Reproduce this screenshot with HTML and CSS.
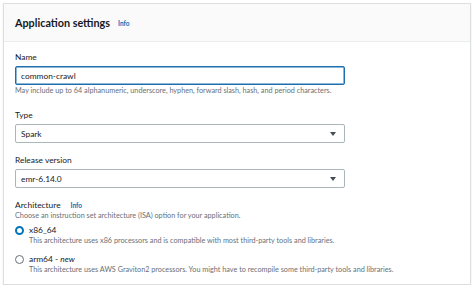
FILE: index.html
```html
<!DOCTYPE html>
<html>
<head>
<meta charset="utf-8">
<link rel="stylesheet" href="styles.css">
</head>
<body>
<div class="card">
  <div class="card-header">
    <h2 class="title">Application settings</h2>
    <span class="info">Info</span>
  </div>
  <div class="card-body">
    <div class="field">
      <div class="label">Name</div>
      <div class="input focused">common-crawl</div>
      <div class="hint">May include up to 64 alphanumeric, underscore, hyphen, forward slash, hash, and period characters.</div>
    </div>
    <div class="field">
      <div class="label">Type</div>
      <div class="input select"><span>Spark</span><span class="caret"></span></div>
    </div>
    <div class="field">
      <div class="label">Release version</div>
      <div class="input select"><span>emr-6.14.0</span><span class="caret"></span></div>
    </div>
    <div class="field">
      <div class="label-row"><span class="label">Architecture</span><span class="info">Info</span></div>
      <div class="hint tight">Choose an instruction set architecture (ISA) option for your application.</div>
      <div class="radio-item first">
        <span class="radio checked"></span>
        <div class="radio-text">
          <div class="radio-label">x86_64</div>
          <div class="hint">This architecture uses x86 processors and is compatible with most third-party tools and libraries.</div>
        </div>
      </div>
      <div class="radio-item">
        <span class="radio"></span>
        <div class="radio-text">
          <div class="radio-label">arm64 - <em>new</em></div>
          <div class="hint">This architecture uses AWS Graviton2 processors. You might have to recompile some third-party tools and libraries.</div>
        </div>
      </div>
    </div>
  </div>
</div>
</body>
</html>
```
FILE: styles.css
```css
html, body {
  margin: 0;
  padding: 0;
  background: #ffffff;
}
body {
  font-family: "Lato", "Open Sans", sans-serif;
  color: #16191f;
  padding: 3px 3px 0 3px;
}
.card {
  border: 1px solid #dcdfe0;
  box-shadow: 0 1px 1px rgba(0,22,40,0.15);
  background: #fff;
  height: 282px;
  box-sizing: border-box;
}
.card-header {
  background: #fafafa;
  border-bottom: 1px solid #eaeded;
  height: 38px;
  box-sizing: border-box;
  display: flex;
  align-items: center;
  padding: 1px 11px 0 11px;
  gap: 8px;
}
.title {
  margin: 0;
  font-size: 10.8px;
  font-weight: 700;
  line-height: 14px;
}
.card-header .info {
  margin-top: 1px;
}
.info {
  color: #0073bb;
  font-size: 6.5px;
  font-weight: 700;
}
.card-body {
  padding: 9px 11px 0 11px;
  display: flex;
  flex-direction: column;
  gap: 11px;
}
.field {
  display: flex;
  flex-direction: column;
}
.label {
  font-size: 8.4px;
  line-height: 12px;
  margin-bottom: 3px;
}
.label-row {
  display: flex;
  align-items: baseline;
  gap: 10px;
  line-height: 10px;
  margin-top: 1px;
}
.label-row .label { margin-bottom: 0; line-height: 10px; }
.input {
  width: 330px;
  height: 19px;
  box-sizing: border-box;
  border: 1px solid #aab7b8;
  border-radius: 2px;
  font-size: 8.4px;
  padding: 0 5px;
  display: flex;
  align-items: center;
}
.input.focused {
  border: 1px solid #1d6fb0;
  box-shadow: 0 0 0 0.5px #1d6fb0 inset;
}
.select {
  justify-content: space-between;
}
.caret {
  width: 0;
  height: 0;
  border-left: 3px solid transparent;
  border-right: 3px solid transparent;
  border-top: 4px solid #444b53;
  margin-right: 3px;
}
.hint {
  font-size: 7.25px;
  color: #687078;
  line-height: 10px;
  margin-top: 1px;
}
.field .hint:last-child { margin-bottom: 2px; }
.hint.tight { margin-top: 0; line-height: 9px; }
.radio-item {
  display: flex;
  gap: 5px;
  margin-top: 5px;
}
.radio-item.first { margin-top: 4px; }
.radio {
  width: 9px;
  height: 9px;
  box-sizing: border-box;
  border-radius: 50%;
  border: 1px solid #687078;
  margin-top: 1.5px;
  flex: none;
}
.radio.checked {
  border: 2.7px solid #0073bb;
}
.radio-label {
  font-size: 8.4px;
  line-height: 12px;
}
.radio-label em {
  font-weight: 400;
}
.radio-text .hint { margin-top: 0; }
```
